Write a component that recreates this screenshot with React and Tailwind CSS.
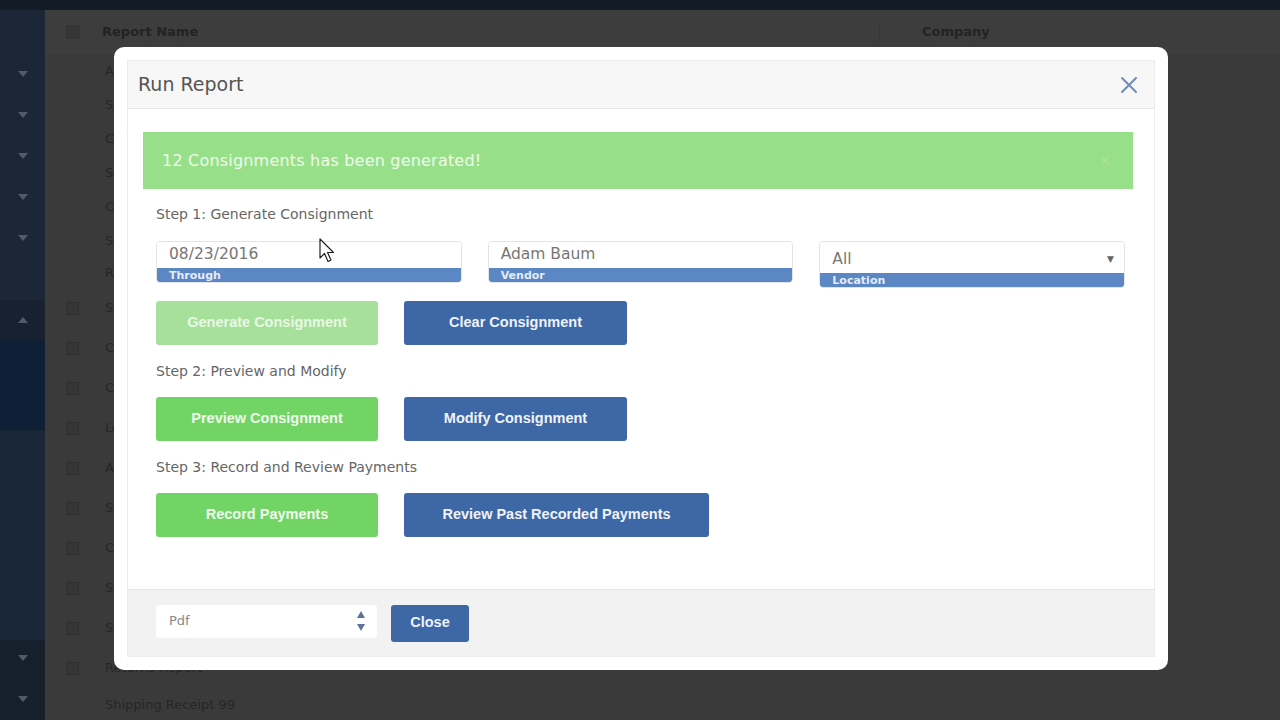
import React from "react";

const rows = [
  { name: "Aging Report", h: 34, box: false },
  { name: "Sales Summary", h: 34, box: false },
  { name: "Consignment Detail", h: 34, box: false },
  { name: "Sales By Vendor", h: 34, box: false },
  { name: "Customer List", h: 34, box: false },
  { name: "Stock Levels", h: 34, box: false },
  { name: "Receiving Log", h: 30, box: false },
  { name: "Sales Tax Report", h: 40, box: true },
  { name: "Consignment Payments", h: 40, box: true },
  { name: "Commission Report", h: 40, box: true },
  { name: "Location Transfers", h: 40, box: true },
  { name: "Adjustments", h: 40, box: true },
  { name: "Shipping Summary", h: 40, box: true },
  { name: "Cost of Goods", h: 40, box: true },
  { name: "Sales Detail", h: 40, box: true },
  { name: "Shipping Receipt", h: 40, box: true },
  { name: "Returns Report", h: 40, box: true },
  { name: "Shipping Receipt 99", h: 34, box: false },
];

function Chevron({ up }) {
  return (
    <svg width="10" height="6" viewBox="0 0 10 6" className={up ? "rotate-180" : ""}>
      <path d="M0 0 L10 0 L5 6 Z" fill="#4f5b6c" />
    </svg>
  );
}

function Field({ value, label, tall, caret }) {
  return (
    <div className="flex-1 flex flex-col rounded-[4px] overflow-hidden border border-[#e4e4e4]">
      <div className={`flex items-center justify-between bg-white px-3 ${tall ? "h-[31px] pt-1" : "h-[26px]"}`}>
        <span className="text-[15.5px] text-[#777]">{value}</span>
        {caret && <span className="text-[9px] text-[#666] mr-[-2px]">▼</span>}
      </div>
      <div className="bg-[#5b87c4] h-[14px] px-3 flex items-center">
        <span className="text-[11px] font-bold text-[#e3ecf8] leading-none">{label}</span>
      </div>
    </div>
  );
}

function Btn({ children, kind, w = "w-[222px]" }) {
  const styles = {
    faded: "bg-[#a6e09a] text-[#e8f8e4]",
    green: "bg-[#72d465] text-[#eefbea]",
    blue: "bg-[#3e67a5] text-[#eef3fa]",
  };
  return (
    <div
      className={`${w} h-[44px] rounded-[3px] flex items-center justify-center text-[14.5px] font-bold ${styles[kind]}`}
      style={{ fontFamily: '"Liberation Sans", Arial, sans-serif' }}
    >
      {children}
    </div>
  );
}

export default function App() {
  return (
    <div
      className="relative w-[1280px] h-[720px] overflow-hidden bg-[#3a3a3a]"
      style={{ fontFamily: '"DejaVu Sans", Verdana, sans-serif' }}
    >
      {/* top bar */}
      <div className="h-[10px] bg-[#131b26]" />
      <div className="flex h-[710px]">
        {/* sidebar */}
        <div className="w-[45px] shrink-0 flex flex-col bg-[#1b2636]">
          <div className="h-[290px] shrink-0 flex flex-col items-center pt-[61px] gap-[35px]">
            <Chevron />
            <Chevron />
            <Chevron />
            <Chevron />
            <Chevron />
          </div>
          <div className="h-[40px] shrink-0 bg-[#17212f] flex items-center justify-center">
            <Chevron up />
          </div>
          <div className="h-[90px] shrink-0 bg-[#0f1f36]" />
          <div className="h-[210px] shrink-0 bg-[#1a2739]" />
          <div className="flex-1 bg-[#161f2c] flex flex-col items-center pt-[15px] gap-[35px]">
            <Chevron />
            <Chevron />
          </div>
        </div>
        {/* main table (dimmed) */}
        <div className="flex-1 flex flex-col">
          <div className="h-[44px] shrink-0 flex items-center bg-[#3d3d3d] text-[13px] font-bold text-[#232323]">
            <div className="w-[14px] h-[14px] ml-[21px] rounded-[2px] bg-[#363636] border border-[#333]" />
            <span className="ml-[22px] w-[777px]">Report Name</span>
            <div className="w-px h-[20px] bg-[#383838]" />
            <span className="ml-[42px]">Company</span>
          </div>
          <div className="flex flex-col">
            {rows.map((r, i) => (
              <div key={i} className="shrink-0 flex items-center text-[13px] text-[#262626]" style={{ height: r.h }}>
                <div
                  className={`w-[13px] h-[13px] ml-[21px] rounded-[2px] border ${r.box ? "border-[#2e2e2e] bg-[#363636]" : "border-transparent"}`}
                />
                <span className="ml-[26px]">{r.name}</span>
              </div>
            ))}
          </div>
        </div>
      </div>

      {/* modal */}
      <div className="absolute left-[114px] top-[47px] w-[1054px] h-[623px] bg-white rounded-[10px] p-[13px]">
        <div className="w-full h-full flex flex-col border border-[#ececec]">
          <div className="h-[48px] shrink-0 bg-[#f7f7f7] border-b border-[#e6e6e6] flex items-center justify-between pl-[10px] pr-[16px]">
            <span className="text-[19px] text-[#555]">Run Report</span>
            <svg width="18" height="18" viewBox="0 0 18 18">
              <path d="M2 2 L16 16 M16 2 L2 16" stroke="#6f8db6" strokeWidth="2" strokeLinecap="round" />
            </svg>
          </div>
          <div className="flex-1 bg-white pl-[15px] pr-[21px] pt-[23px]">
            <div className="h-[57px] bg-[#98df8a] flex items-center justify-between pl-[19px] pr-[22px]">
              <span className="text-[16px] tracking-[0.2px] text-[#effcec]">12 Consignments has been generated!</span>
              <span className="text-[14px] font-bold text-[#a8e39c]">×</span>
            </div>
            <div className="pl-[13px] pr-[8px]">
              <div className="mt-[18px] text-[14px] text-[#666] leading-none">Step 1: Generate Consignment</div>
              <div className="mt-[20px] flex items-start gap-[26px]">
                <Field value="08/23/2016" label="Through" />
                <Field value="Adam Baum" label="Vendor" />
                <Field value="All" label="Location" tall caret />
              </div>
              <div className="mt-[13px] flex gap-[26px]">
                <Btn kind="faded">Generate Consignment</Btn>
                <Btn kind="blue" w="w-[223px]">Clear Consignment</Btn>
              </div>
              <div className="mt-[19px] text-[14px] text-[#666] leading-none">Step 2: Preview and Modify</div>
              <div className="mt-[19px] flex gap-[26px]">
                <Btn kind="green">Preview Consignment</Btn>
                <Btn kind="blue" w="w-[223px]">Modify Consignment</Btn>
              </div>
              <div className="mt-[19px] text-[14px] text-[#666] leading-none">Step 3: Record and Review Payments</div>
              <div className="mt-[19px] flex gap-[26px]">
                <Btn kind="green">Record Payments</Btn>
                <Btn kind="blue" w="w-[305px]">Review Past Recorded Payments</Btn>
              </div>
            </div>
          </div>
          <div className="h-[67px] shrink-0 bg-[#f2f2f2] border-t border-[#e6e6e6] flex items-center pl-[28px] gap-[14px]">
            <div className="w-[221px] h-[33px] bg-white rounded-[3px] flex items-center justify-between pl-[13px] pr-[12px] -mt-[4px]">
              <span className="text-[13px] text-[#888]">Pdf</span>
              <svg width="8" height="22" viewBox="0 0 8 22">
                <path d="M4 1 L8 8 L0 8 Z" fill="#5d7397" />
                <path d="M0 14 L8 14 L4 21 Z" fill="#5d7397" />
              </svg>
            </div>
            <div
              className="w-[78px] h-[37px] rounded-[3px] bg-[#3e67a5] flex items-center justify-center text-[14.5px] font-bold text-[#eef3fa]"
              style={{ fontFamily: '"Liberation Sans", Arial, sans-serif' }}
            >
              Close
            </div>
          </div>
        </div>
      </div>

      {/* mouse cursor */}
      <svg className="absolute left-[319px] top-[238px]" width="16" height="26" viewBox="0 0 16 26">
        <path d="M1 1 L1 20 L5.5 15.5 L9 23.5 L12 22 L8.5 14.5 L14.5 14.5 Z" fill="#fff" stroke="#222" strokeWidth="1.2" strokeLinejoin="round" />
      </svg>
    </div>
  );
}
